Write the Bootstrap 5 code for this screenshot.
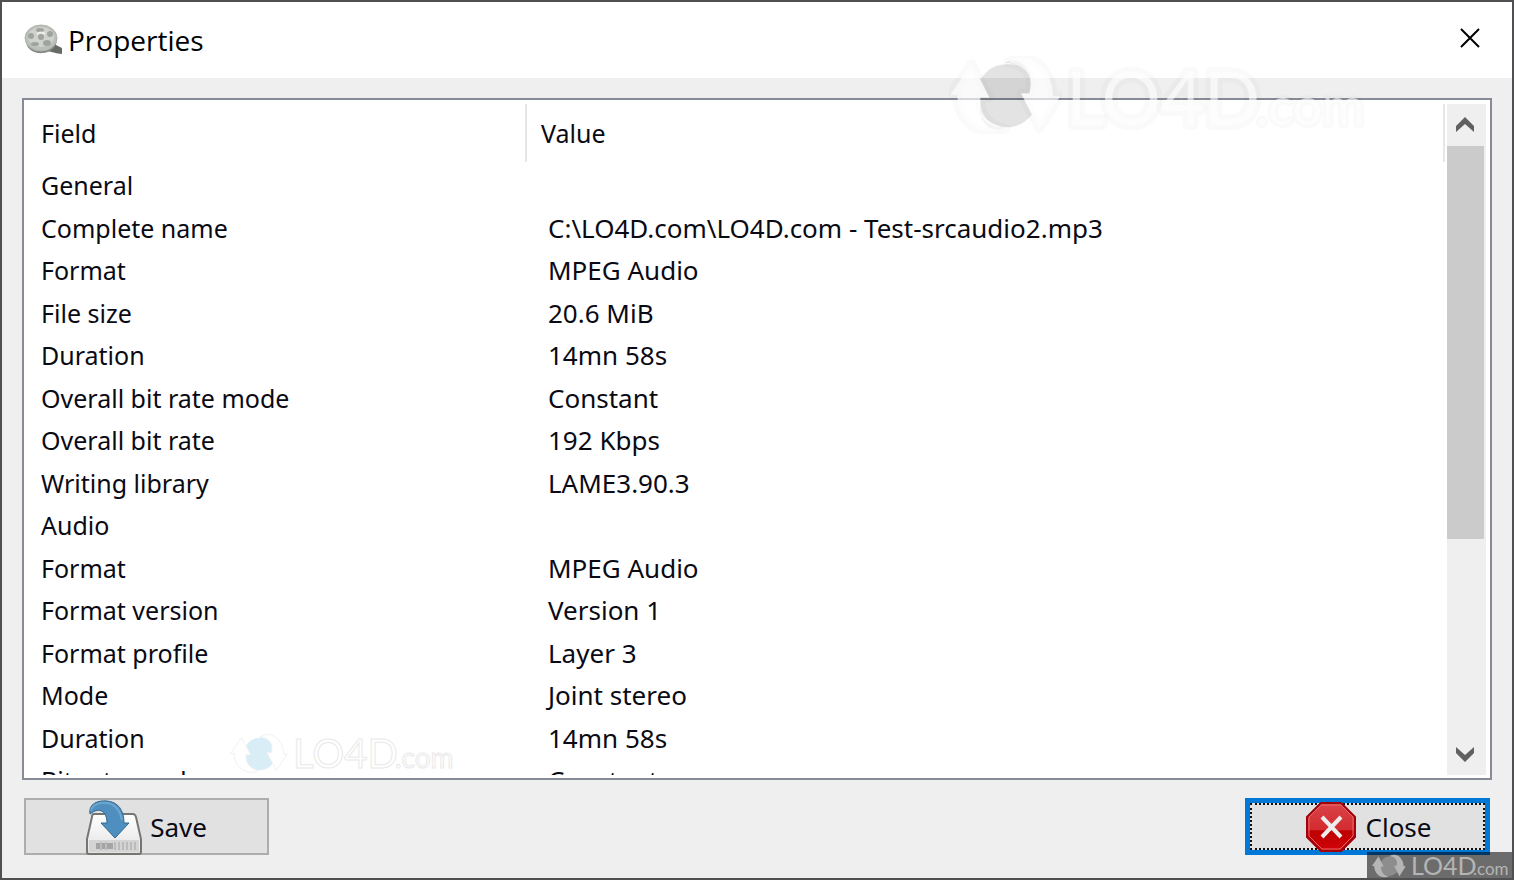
<!DOCTYPE html>
<html lang="en">
<head>
<meta charset="utf-8">
<meta name="viewport" content="width=device-width, initial-scale=1">
<title>Properties</title>
<link rel="stylesheet" href="https://cdn.jsdelivr.net/npm/bootstrap@5.3.0/dist/css/bootstrap.min.css">
<style>
  body { background: #555; font-family: "Noto Sans", sans-serif; font-size: 26px; color: #0a0a14; }
  .dialog-window { background: #efefef; border: 2px solid #505052; }
  .title-bar { background: #fff; height: 76px; padding: 0 28px 0 22px; }
  .title-bar h1 { font: 400 28px/40px "Open Sans", sans-serif; color: #000; margin: 0 0 0 6px; }
  .title-close { width: 28px; height: 28px; margin-bottom: 4px; }
  .plain { border: 0; padding: 0; background: transparent; line-height: 0; }
  .dialog-body { padding: 20px 20px 23px; gap: 18px; }
  .dialog-body > footer { padding: 0 2px; }
  .list-box { background: #fff; border: 2px solid #868b96; padding: 4px 4px 3px 0; }
  .fields { table-layout: fixed; line-height: 36px; white-space: nowrap; }
  .fields th { font-weight: 400; font-size: 25px; }
  .fields thead th { height: 58px; padding: 0 15px 0 17px; border-right: 2px solid #e6e6e6; vertical-align: middle; }
  .fields thead th + th { padding-left: 14px; }
  .fields thead::after { content: ""; display: block; height: 2px; }
  .field-col { width: 502px; }
  .fields tbody th, .fields tbody td { height: 42px; padding: 0 0 0 17px; vertical-align: middle; }
  .fields tbody tr:nth-child(even) > * { height: 43px; }
  .fields tbody td { padding-left: 22px; }
  .scroll-track { background: #efefef; width: 39px; margin: 0 0 0 2px; }
  .scroll-track button { height: 42px; padding-right: 2px; }
  .scroll-thumb { background: #cbcbcb; height: 67%; margin-right: 2px; }
  .action { width: 245px; height: 57px; background: #e1e1e1; border: 2px solid #adadad; padding: 0; color: #0a0a14; line-height: 36px; }
  .action-default { border: 5px solid #0078d7; }
  .action-default .focus-dots { border: 2px dotted #111; }
  .brand text { font-family: Lato, sans-serif; }
  .brand { pointer-events: none; }
  .brand-top { top: 48px; right: 132px; }
  .brand-list { bottom: 100px; left: 224px; }
  .brand-corner { right: 0; bottom: 0; background: rgba(0,0,0,.55); }
</style>
</head>
<body>
<svg width="0" height="0" class="position-absolute" aria-hidden="true">
  <symbol id="arrows" viewBox="85 45 340 235">
    <path d="M152 70 206 170H179C176 215 200 255 255 263C180 295 112 245 110 163H88Z"/>
    <path d="M262 64C340 20 400 100 398 166H420L357 262 302 158H327C338 120 330 75 262 64Z"/>
  </symbol>
  <symbol id="globe" viewBox="85 45 340 235">
    <path d="M180 115C200 85 225 70 260 70C295 68 316 80 329 98C334 120 330 140 327 158H302L335 222C315 245 290 260 262 260C225 258 195 240 178 215L180 170H206Z"/>
    <path d="M255 66C280 50 310 62 325 92C305 72 280 66 255 66Z M180 223C198 250 225 260 252 262C225 277 190 262 180 223Z"/>
  </symbol>
</svg>
<main class="dialog-window position-relative vh-100 d-flex flex-column">
  <header class="title-bar d-flex align-items-center flex-shrink-0">
    <svg width="38" height="32" viewBox="0 0 38 32" aria-hidden="true">
      <path d="M30 20 38 24V30C32 30 27 27 22 27Z" fill="#666b66"/>
      <path d="M2 17C2 25 10 30 19 29C28 28 33 22 33 15" fill="#858984"/>
      <ellipse cx="17" cy="14" rx="16" ry="13" fill="#bcc0ba" stroke="#b0b4ae"/>
      <ellipse cx="17" cy="13" rx="13" ry="10" fill="#d0d3cd"/>
      <g fill="#a0a49e"><ellipse cx="16" cy="6" rx="4" ry="2"/><ellipse cx="26" cy="10" rx="3" ry="3"/><ellipse cx="7" cy="12" rx="3" ry="3"/><ellipse cx="11" cy="20" rx="4" ry="2"/><ellipse cx="23" cy="19" rx="4" ry="3"/><circle cx="17" cy="13" r="3"/></g>
      <path d="M13 10Q17 7 21 10" fill="none" stroke="#eef0ec" stroke-width="2"/>
    </svg>
    <h1>Properties</h1>
    <button type="button" class="title-close plain ms-auto" aria-label="Close window">
      <svg width="28" height="28" viewBox="0 0 28 28"><path d="m5 5 18 18M23 5 5 23" stroke="#000" stroke-width="2"/></svg>
    </button>
  </header>
  <div class="dialog-body flex-grow-1 d-flex flex-column overflow-hidden">
    <section class="list-box d-flex flex-grow-1 overflow-hidden">
      <div class="flex-grow-1 overflow-hidden">
        <table class="fields w-100">
          <colgroup><col class="field-col"><col></colgroup>
          <thead><tr><th scope="col">Field</th><th scope="col">Value</th></tr></thead>
          <tbody>
            <tr><th scope="row">General</th><td></td></tr>
            <tr><th scope="row">Complete name</th><td>C:\LO4D.com\LO4D.com - Test-srcaudio2.mp3</td></tr>
            <tr><th scope="row">Format</th><td>MPEG Audio</td></tr>
            <tr><th scope="row">File size</th><td>20.6 MiB</td></tr>
            <tr><th scope="row">Duration</th><td>14mn 58s</td></tr>
            <tr><th scope="row">Overall bit rate mode</th><td>Constant</td></tr>
            <tr><th scope="row">Overall bit rate</th><td>192 Kbps</td></tr>
            <tr><th scope="row">Writing library</th><td>LAME3.90.3</td></tr>
            <tr><th scope="row">Audio</th><td></td></tr>
            <tr><th scope="row">Format</th><td>MPEG Audio</td></tr>
            <tr><th scope="row">Format version</th><td>Version 1</td></tr>
            <tr><th scope="row">Format profile</th><td>Layer 3</td></tr>
            <tr><th scope="row">Mode</th><td>Joint stereo</td></tr>
            <tr><th scope="row">Duration</th><td>14mn 58s</td></tr>
            <tr><th scope="row">Bit rate mode</th><td>Constant</td></tr>
          </tbody>
        </table>
      </div>
      <div class="scroll-track d-flex flex-column flex-shrink-0">
        <button type="button" class="plain flex-shrink-0 pe-1" aria-label="Scroll up"><svg width="20" height="18" viewBox="0 0 20 18"><path d="M10 1 19 10V16L10 8 1 16V10Z" fill="#606060"/></svg></button>
        <div class="flex-grow-1 overflow-hidden d-flex flex-column"><div class="scroll-thumb"></div></div>
        <button type="button" class="plain flex-shrink-0 pe-1" aria-label="Scroll down"><svg width="20" height="18" viewBox="0 0 20 18"><path d="M10 17 19 8V2L10 10 1 2V8Z" fill="#606060"/></svg></button>
      </div>
    </section>
    <footer class="d-flex justify-content-between flex-shrink-0">
      <button type="button" class="action d-flex align-items-center justify-content-center gap-2">
        <svg width="56" height="56" viewBox="0 0 56 56" aria-hidden="true">
          <defs><linearGradient id="drive" x2="0" y2="1"><stop stop-color="#fff"/><stop offset="1" stop-color="#e2e2e2"/></linearGradient></defs>
          <path d="M8 15H47Q49 15 50 18L55 40V53Q55 55 53 55H3Q1 55 1 53V40L6 18Q6 15 8 15Z" fill="url(#drive)" stroke="#74766f" stroke-width="2"/>
          <path d="M3 41H53V53H3Z" fill="#d4d4d4"/><path d="M10 44H27V50H10Z" fill="#a4a4a4"/>
          <path d="M29 43V51M33 43V51M37 43V51M41 43V51M45 43V51M49 43V51M15 43V51M20 43V51" stroke="#bbb" stroke-width="2"/>
          <path d="M4 15C2 5 12 1 21 2C32 3 38 11 38 24H43L29 39 15 24H21C21 13 14 7 4 15Z" fill="#4e8fc0" stroke="#32698f"/>
          <path d="M5 12C6 6 13 3 21 4C29 5 34 12 36 21" fill="none" stroke="#6fa6cd" stroke-width="2"/>
        </svg>
        <span>Save</span>
      </button>
      <button type="button" class="action action-default">
        <span class="focus-dots d-flex align-items-center justify-content-center w-100 h-100 gap-2">
        <svg width="54" height="54" viewBox="0 0 54 54" class="flex-shrink-0" aria-hidden="true">
          <defs><linearGradient id="stop" x2="0" y2="1"><stop stop-color="#d84448"/><stop offset=".56" stop-color="#d32b30"/><stop offset=".58" stop-color="#bd0000"/><stop offset="1" stop-color="#d00408"/></linearGradient></defs>
          <path d="M17 3H37L51 17V37L37 51H17L3 37V17Z" fill="url(#stop)" stroke="#a30009" stroke-width="2" stroke-linejoin="round"/>
          <path d="M17 5H37L49 17V36L36 49H18L5 36V17Z" fill="none" stroke="#e66a6d"/>
          <path d="m18 17 19 20M37 17 18 37" stroke="#eee" stroke-width="4"/>
        </svg>
        <span>Close</span></span>
      </button>
    </footer>
  </div>
  <svg class="brand brand-top position-absolute" width="432" height="92" viewBox="0 0 432 92">
    <g stroke="#000" stroke-opacity=".02" stroke-width="10" stroke-linejoin="round" fill="none">
      <use href="#arrows" x="1" y="6" width="113" height="78" stroke-width="30"/>
      <text x="118" y="75" font-size="74" fill="none">LO4D</text><text x="308" y="75" font-size="52" stroke-width="6" fill="none">.com</text>
    </g>
    <use href="#globe" x="1" y="6" width="113" height="78" fill="#000" fill-opacity=".11"/>
    <use href="#arrows" x="1" y="6" width="113" height="78" fill="#fff" fill-opacity=".65"/>
    <g fill="#fff" fill-opacity=".6"><text x="118" y="75" font-size="74">LO4D</text><text x="308" y="75" font-size="52">.com</text></g>
  </svg>
  <svg class="brand brand-list position-absolute" width="240" height="50" viewBox="0 0 240 50">
    <use href="#globe" x="4" y="5" width="58" height="41" fill="#d9edf6"/>
    <use href="#arrows" x="4" y="5" width="58" height="41" fill="#fff" stroke="#eee" stroke-width="5"/>
    <g fill="#fff" stroke="#e9e9e9" stroke-width="1"><text x="67" y="40" font-size="40">LO4D</text><text x="169" y="40" font-size="28">.com</text></g>
  </svg>
  <svg class="brand brand-corner position-absolute" width="145" height="26" viewBox="0 0 145 26">
    <use href="#globe" x="4" y="2" width="36" height="24" fill="#8d8d8d"/>
    <use href="#arrows" x="4" y="2" width="36" height="24" fill="#b5b5b5"/>
    <g fill="#b5b5b5"><text x="44" y="23" font-size="25">LO4D</text><text x="106" y="23" font-size="17">.com</text></g>
  </svg>
</main>
<script src="https://cdn.jsdelivr.net/npm/bootstrap@5.3.0/dist/js/bootstrap.bundle.min.js"></script>
</body>
</html>
